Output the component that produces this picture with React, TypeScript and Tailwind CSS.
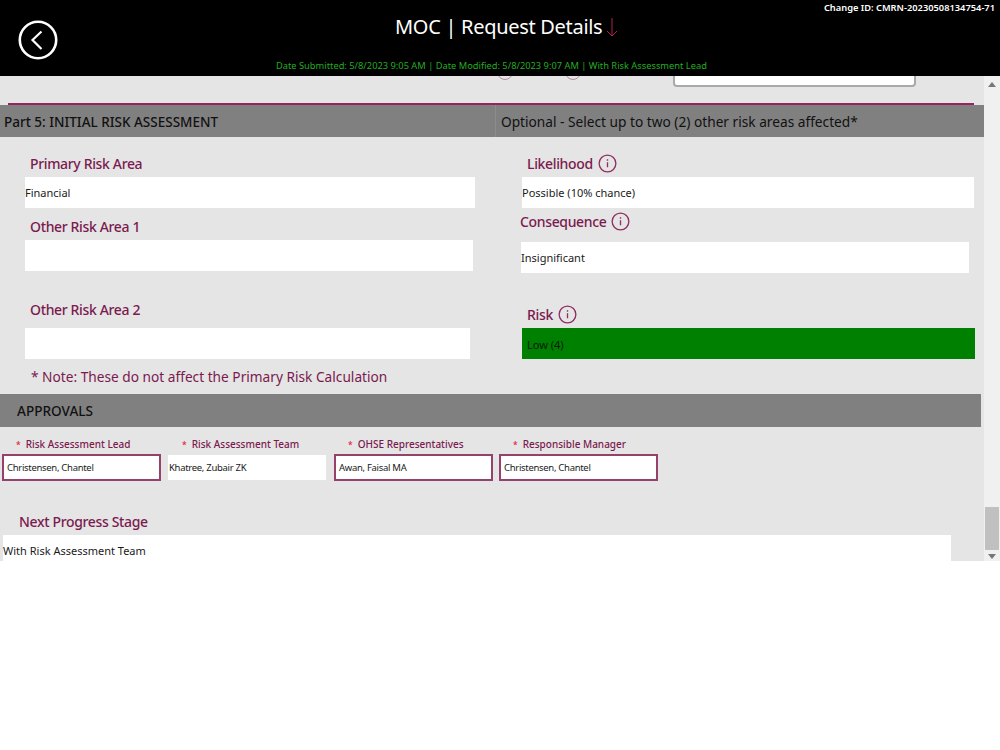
const font = "[font-family:'Noto_Sans',sans-serif]";
const labelCls = "text-[14px] leading-[20px] font-medium tracking-[-0.35px] text-[#7a1a4f]";
const valueCls = "text-[11px] leading-[31px] text-[#1a1a1a] bg-white";

function InfoIcon() {
  return (
    <svg width="19" height="19" viewBox="0 0 20 20" fill="none" stroke="#8f2f63" strokeWidth="1.4" className="shrink-0">
      <circle cx="10" cy="10" r="8.8" />
      <path d="M10 8.6v5.4M10 5.6v1.4" />
    </svg>
  );
}

function BackIcon() {
  return (
    <svg width="40" height="40" viewBox="0 0 40 40" fill="none" stroke="#fff" strokeWidth="2.6">
      <circle cx="20" cy="20" r="18.2" />
      <path d="M23.5 11.5 L14.5 20 L23.5 29" strokeWidth="2.2" />
    </svg>
  );
}

function Approver({ name, value, boxed, width }: { name: string; value: string; boxed?: boolean; width: string }) {
  return (
    <div className={width}>
      <div className="h-[18px] pl-[14px] text-[10px] leading-[16px] font-medium whitespace-nowrap text-[#7a1a4f]">
        <span className="mr-[5px] text-[8.5px] text-[#e0203c]">*</span>
        {name}
      </div>
      <div
        className={
          boxed
            ? "h-[27px] border-2 border-[#96406c] bg-white pl-[3px] text-[9.5px] leading-[23px] tracking-[-0.3px] text-[#1a1a1a]"
            : "mt-[1px] h-[25px] bg-white pl-[1px] text-[9.5px] leading-[25px] tracking-[-0.3px] text-[#1a1a1a]"
        }
      >
        {value}
      </div>
    </div>
  );
}

export default function App() {
  return (
    <div className={`h-[750px] w-[1000px] overflow-hidden bg-white ${font}`}>
      <header className="flex h-[76px] bg-black">
        <div className="w-[250px] pt-[20px] pl-[18px]">
          <BackIcon />
        </div>
        <div className="flex-1">
          <div className="pt-[1px] pr-[5px] text-right text-[9.3px] leading-[13px] font-semibold text-white">Change ID: CMRN-20230508134754-71</div>
          <div className="-mt-[1px] flex h-[27px] items-center pl-[145px] text-[20px] leading-[27px] tracking-[-0.3px] whitespace-nowrap text-white">
            MOC | Request Details
            <svg width="14" height="22" viewBox="0 0 14 22" fill="none" stroke="#a8254f" strokeWidth="1" className="mt-[1px] ml-[3px]">
              <path d="M7 2v18M2 15l5 5 5-5" />
            </svg>
          </div>
          <div className="mt-[19px] pl-[26px] text-[9.3px] leading-[14px] whitespace-nowrap text-[#22ad22]">
            Date Submitted: 5/8/2023 9:05 AM | Date Modified: 5/8/2023 9:07 AM | With Risk Assessment Lead
          </div>
        </div>
      </header>

      <div className="flex h-[485px]">
        <main className="h-full w-[984px] overflow-hidden bg-[#e5e5e5]">
          <div className="h-[27px] overflow-hidden">
            <div className="flex pl-[497px]">
              <span className="-mt-[12px] h-[16px] w-[16px] rounded-full border border-[#b98aa3]" />
              <span className="-mt-[12px] ml-[52px] h-[16px] w-[16px] rounded-full border border-[#b98aa3]" />
              <span className="-mt-[10px] ml-[92px] h-[21px] w-[243px] rounded-[4px] border-2 border-[#a9a9a9] bg-white" />
            </div>
          </div>
          <div className="ml-[8px] h-[2px] w-[966px] bg-[#96245f]" />
          <div className="flex h-[32px] bg-[#808080] leading-[34px] text-[#111]">
            <div className="w-[496px] border-r border-[#8c8c8c] pl-[4px] text-[13.5px] font-medium">Part 5: INITIAL RISK ASSESSMENT</div>
            <div className="pl-[5px] text-[13.7px]">Optional - Select up to two (2) other risk areas affected*</div>
          </div>

          <div className="flex h-[257px]">
            <section className="w-[495px] pl-[25px]">
              <div className={`mt-[17px] pl-[5px] ${labelCls}`}>Primary Risk Area</div>
              <div className={`mt-[3px] h-[31px] w-[450px] ${valueCls}`}>Financial</div>
              <div className={`mt-[9px] pl-[5px] ${labelCls}`}>Other Risk Area 1</div>
              <div className="mt-[3px] h-[31px] w-[448px] bg-white" />
              <div className={`mt-[29px] pl-[5px] ${labelCls}`}>Other Risk Area 2</div>
              <div className="mt-[8px] h-[31px] w-[445px] bg-white" />
              <div className="mt-[8px] pl-[6px] text-[13.7px] leading-[20px] text-[#7a1a4f]">* Note: These do not affect the Primary Risk Calculation</div>
            </section>
            <section className="flex-1">
              <div className="mt-[16px] ml-[32px] flex h-[21px] items-center gap-[5px]">
                <span className={labelCls}>Likelihood</span>
                <InfoIcon />
              </div>
              <div className={`mt-[3px] ml-[27px] h-[31px] w-[452px] ${valueCls}`}>Possible (10% chance)</div>
              <div className="mt-[3px] ml-[25px] flex h-[21px] items-center gap-[5px]">
                <span className={labelCls}>Consequence</span>
                <InfoIcon />
              </div>
              <div className={`mt-[10px] ml-[26px] h-[31px] w-[448px] ${valueCls}`}>Insignificant</div>
              <div className="mt-[31px] ml-[32px] flex h-[21px] items-center gap-[5px]">
                <span className={labelCls}>Risk</span>
                <InfoIcon />
              </div>
              <div className="mt-[3px] ml-[27px] h-[31px] w-[453px] bg-[#008000] pl-[5px] text-[11px] leading-[33px] text-[#041a04]">Low (4)</div>
            </section>
          </div>

          <div className="h-[33px] w-[981px] bg-[#808080] pl-[17px] text-[13.6px] leading-[33px] font-medium text-[#111]">APPROVALS</div>

          <div className="mt-[9px] flex pl-[2px]">
            <Approver name="Risk Assessment Lead" value="Christensen, Chantel" boxed width="w-[159px]" />
            <div className="ml-[7px]">
              <Approver name="Risk Assessment Team" value="Khatree, Zubair ZK" width="w-[158px]" />
            </div>
            <div className="ml-[8px]">
              <Approver name="OHSE Representatives" value="Awan, Faisal MA" boxed width="w-[159px]" />
            </div>
            <div className="ml-[6px]">
              <Approver name="Responsible Manager" value="Christensen, Chantel" boxed width="w-[159px]" />
            </div>
          </div>

          <div className={`mt-[31px] pl-[19px] ${labelCls}`}>Next Progress Stage</div>
          <div className="mt-[3px] ml-[3px] h-[26px] w-[948px] bg-white text-[11px] leading-[32px] text-[#1a1a1a]">With Risk Assessment Team</div>
        </main>

        <aside className="flex w-[16px] flex-col bg-[#f0f0f0]">
          <div className="flex h-[431px] justify-center pt-[6px]">
            <svg width="8" height="5" viewBox="0 0 8 5" fill="#777">
              <path d="M4 0l4 5H0z" />
            </svg>
          </div>
          <div className="mx-auto h-[43px] w-[14px] bg-[#c0c0c0]" />
          <div className="flex justify-center pt-[4px]">
            <svg width="8" height="5" viewBox="0 0 8 5" fill="#777">
              <path d="M0 0h8L4 5z" />
            </svg>
          </div>
        </aside>
      </div>
    </div>
  );
}
